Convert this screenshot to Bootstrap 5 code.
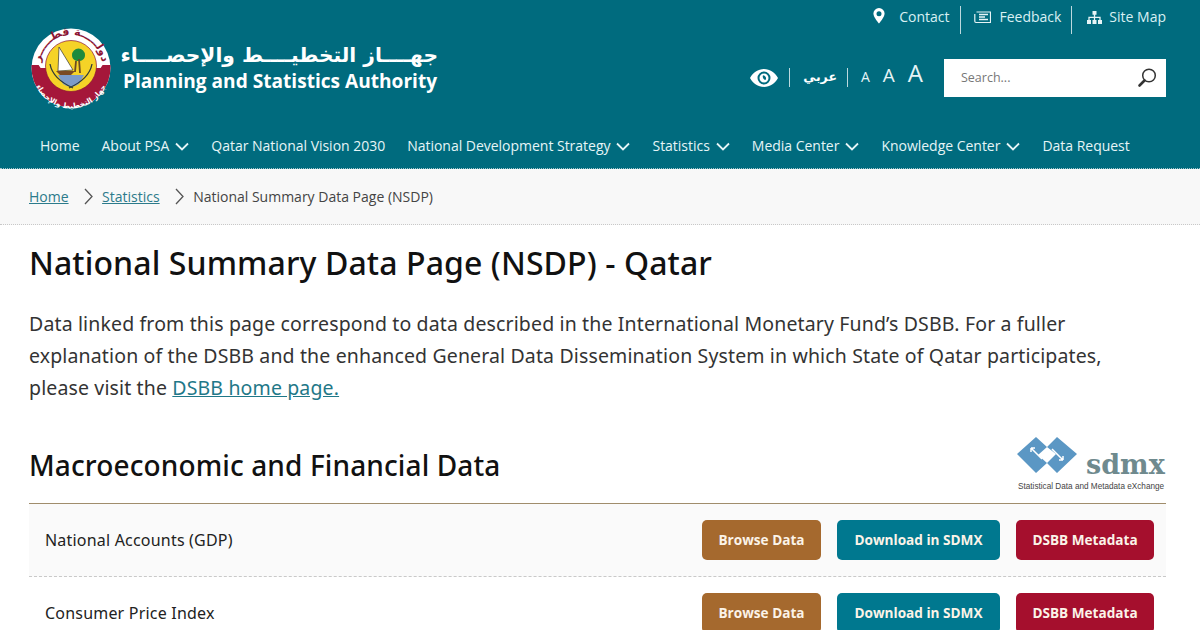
<!DOCTYPE html>
<html lang="en">
<head>
<meta charset="utf-8">
<title>National Summary Data Page (NSDP) - Qatar</title>
<link rel="stylesheet" href="https://cdn.jsdelivr.net/npm/bootstrap@5.3.0/dist/css/bootstrap.min.css">
<style>
html,body{overflow:hidden;height:630px}
body{font-family:"Open Sans","DejaVu Sans",sans-serif;color:#222;background:#fff}
.site-top{background:#006b7e;height:169px;border-bottom:1px dotted #9fc4cb;padding:0 34px 0 29px;color:#fff}
.top-block{height:134px}
.brand-wrap{padding-top:26px}
.top-links{height:34px;padding-top:6px}
.top-links a{color:#d9f0f3;font-size:14px;text-decoration:none;display:flex;align-items:center;line-height:22px}
.top-links .t-item{padding:0 10px 0 15px;border-right:1px solid #bcd9de}
.top-links .t-item:first-child{padding-right:11px}
.top-links .t-item:nth-child(2){padding-left:13px}
.top-links .t-item:last-child{border-right:0;padding-right:0}
.ic-a{margin-right:14px;margin-top:-3px}
.ic-b{margin-right:8px}
.ic-c{margin-right:7px}
.brand-txt{margin-left:10px;margin-top:16px}
.brand-ar{font-family:"DejaVu Sans",sans-serif;font-weight:700;font-size:20.200px;line-height:26px;direction:rtl;width:315px;white-space:nowrap}
.brand-en{font-weight:700;font-size:19.100px;line-height:24px;white-space:nowrap;margin-top:1px}
.tools{margin-top:25px;height:38px}
.tools .sep{width:1px;height:19px;background:#bcd9de;margin-bottom:2px}
.ar-link{font-family:"DejaVu Sans",sans-serif;font-weight:700;font-size:12.500px}
.sizes{gap:13px;margin:0 21px 0 13px;padding-bottom:10px}
.sizes span{color:#e6f4f6;line-height:1}
.sz1{font-size:14px}.sz2{font-size:19px}.sz3{font-size:24px}
.eye{margin-right:11px}
.ar-wrap{margin:0 10px 0 13px;padding-bottom:6px}
.search-box{width:222px;height:38px;background:#fff;padding:0 8px 0 17px}
.search-box span{color:#777;font-size:12.500px}
.main-nav{padding-left:11px;gap:22px}
.main-nav a{color:#e6f5f7;font-size:14px;letter-spacing:-.02px;text-decoration:none;display:flex;align-items:center;line-height:24px;white-space:nowrap}
.main-nav a svg{margin-left:6px}
.crumbs{height:56px;background:#f8f8f8;border-bottom:1px dotted #c8c8c8;padding-left:29px;font-size:14px;color:#444}
.crumbs a{color:#2c7b8b}
.crumbs svg{margin:0 9.500px 0 15px}
.content-wrap{padding:0 34px 0 29px}
.pg-title{font-family:"Noto Sans",sans-serif;font-size:32px;font-weight:500;line-height:40px;color:#111;margin:18px 0 25px;white-space:nowrap;letter-spacing:.1px}
.intro{font-family:"Noto Sans",sans-serif;font-size:19.500px;line-height:32px;color:#333;margin:0;letter-spacing:.14px;max-width:1115px}
.intro a{color:#1f7888}
.sec-head{margin-top:34px;height:66px;border-bottom:1px solid #a08d6c}
.sec-title{font-family:"Noto Sans",sans-serif;font-size:28px;font-weight:500;line-height:36px;color:#111;margin:0 0 20px;white-space:nowrap;letter-spacing:.12px}
.sdmx-logo{margin-bottom:10px}
.data-row{height:73px;padding:0 12px 0 16px;border-bottom:1px dashed #c9c9c9;font-family:"Noto Sans",sans-serif;font-size:16px;color:#222;letter-spacing:.2px}
.data-row.shade{background:#fafafa}
.act{height:40px;padding:0;font-family:"Open Sans",sans-serif;font-size:13.600px;font-weight:700;letter-spacing:0;color:#fbf3e8;border:0;border-radius:5px;margin-left:16px;display:flex;align-items:center;justify-content:center}
.act-browse{background:#a5692e;width:119px}
.act-sdmx{background:#00788f;width:163px}
.act-dsbb{background:#a50f2d;width:138px}
</style>
</head>
<body>
<header class="site-top">
  <div class="top-block d-flex justify-content-between">
    <div class="brand-wrap d-flex align-items-start">
      <svg class="flex-shrink-0" width="84" height="84" viewBox="0 0 84 84">
        <defs>
          <path id="arcTop" d="M11 40a31 31 0 0 1 62 0"/>
          <path id="arcBot" d="M3.500 44a38.500 38.500 0 0 0 77 0"/>
        </defs>
        <circle cx="42" cy="42" r="39.500" fill="#fff"/>
        <path fill="#a5173a" d="M2.600 39h7l2 3h60l2-3h7.800A39.500 39.500 0 1 1 2.600 39z"/>
        <text font-family="DejaVu Sans" font-weight="700" font-size="11" fill="#8c1433" direction="rtl"><textPath href="#arcTop" startOffset="50%" text-anchor="middle">دولـــــة قطـــــر</textPath></text>
        <text font-family="DejaVu Sans" font-weight="700" font-size="7.500" fill="#fff" direction="rtl"><textPath href="#arcBot" startOffset="50%" text-anchor="middle">جهاز التخطيط والإحصاء</textPath></text>
        <circle cx="42" cy="40" r="25.500" fill="#f5d327" stroke="#8c1433" stroke-width=".7"/>
        <path fill="#fff" stroke="#333" stroke-width=".7" d="M30 21l14 23-15 1z"/>
        <path fill="#7a4a23" d="M27 45h19l-4 4H31z"/>
        <path fill="#1d8a3d" d="M43 29a6.500 6.500 0 0 1 13 0c0 4-3 6-6.500 6S43 33 43 29z"/>
        <path stroke="#6a4a23" stroke-width="1.800" d="M50 33l1 14M47 35l-1 11"/>
        <path fill="#7c9bc9" d="M29 49h26l-5 9a13 13 0 0 1-16 0z"/>
        <path fill="none" stroke="#2d3a3a" stroke-width="1.300" d="M21 38c2 11 12 19 23 24M63 38c-2 11-12 19-23 24"/>
      </svg>
      <div class="brand-txt">
        <div class="brand-ar" lang="ar">جهــــاز التخطيــــط والإحصــــاء</div>
        <div class="brand-en">Planning and Statistics Authority</div>
      </div>
    </div>
    <div class="d-flex flex-column align-items-end">
      <div class="top-links d-flex justify-content-end">
        <div class="t-item"><a href="#"><svg class="ic-a" width="12" height="16" viewBox="0 0 12 16"><path fill="#fff" fill-rule="evenodd" d="M6 0a5.600 5.600 0 0 0-5.600 5.600C.4 9.400 6 15.500 6 15.500s5.600-6.100 5.600-9.900A5.600 5.600 0 0 0 6 0zm0 3.200a2.500 2.500 0 1 1 0 5 2.500 2.500 0 0 1 0-5z"/></svg>Contact</a></div>
        <div class="t-item"><a href="#"><svg class="ic-b" width="17" height="13" viewBox="0 0 17 13"><path fill="none" stroke="#e6f4f6" stroke-width="1.200" d="M2.500 1h14v10.500H2A1.200 1.200 0 0 1 .8 10.300V3"/><path stroke="#e6f4f6" stroke-width="1.500" d="M5 3.500h9M5 6h6M5 8.500h9"/></svg>Feedback</a></div>
        <div class="t-item"><a href="#"><svg class="ic-c" width="15" height="13" viewBox="0 0 15 13"><path fill="#e6f4f6" d="M5.500 0h4v3.700h-4zM0 9h4v4H0zM5.500 9h4v4h-4zM11 9h4v4h-4z"/><path fill="none" stroke="#e6f4f6" stroke-width="1.300" d="M7.500 3v6M2 9V6.300h11V9"/></svg>Site Map</a></div>
      </div>
      <div class="d-flex align-items-center tools">
        <svg class="eye" width="28" height="18" viewBox="0 0 28 18"><path fill="#fff" fill-rule="evenodd" d="M14 0C8 0 3 3.500 0 9c3 5.500 8 9 14 9s11-3.500 14-9c-3-5.500-8-9-14-9zm0 2.500a6.500 6.500 0 1 1 0 13 6.500 6.500 0 0 1 0-13z"/><path fill="#fff" fill-rule="evenodd" d="M14 4.500a4.500 4.500 0 1 0 4.500 4.500A4.500 4.500 0 0 0 14 4.500zm-1 1.800a3 3 0 0 1 2.500 4.700A3.500 3.500 0 0 1 13 6.300z"/></svg>
        <span class="sep"></span>
        <span class="ar-wrap"><a href="#" class="ar-link text-white text-decoration-none" lang="ar">عربي</a></span>
        <span class="sep"></span>
        <div class="sizes d-flex align-items-baseline">
          <span class="sz1">A</span><span class="sz2">A</span><span class="sz3">A</span>
        </div>
        <div class="search-box d-flex align-items-center justify-content-between">
          <span>Search...</span>
          <svg width="22" height="22" viewBox="0 0 22 22"><circle cx="13" cy="8.500" r="6.300" fill="none" stroke="#333" stroke-width="1.500"/><path stroke="#333" stroke-width="2.600" stroke-linecap="round" d="M8.500 13.500L3.500 18.500"/></svg>
        </div>
      </div>
    </div>
  </div>
  <nav class="main-nav d-flex">
    <a href="#">Home</a>
    <a href="#">About PSA<svg width="14" height="9" viewBox="0 0 14 9"><path fill="none" stroke="#e6f5f7" stroke-width="1.800" d="M1 1.500l6 6 6-6"/></svg></a>
    <a href="#">Qatar National Vision 2030</a>
    <a href="#">National Development Strategy<svg width="14" height="9" viewBox="0 0 14 9"><path fill="none" stroke="#e6f5f7" stroke-width="1.800" d="M1 1.500l6 6 6-6"/></svg></a>
    <a href="#">Statistics<svg width="14" height="9" viewBox="0 0 14 9"><path fill="none" stroke="#e6f5f7" stroke-width="1.800" d="M1 1.500l6 6 6-6"/></svg></a>
    <a href="#">Media Center<svg width="14" height="9" viewBox="0 0 14 9"><path fill="none" stroke="#e6f5f7" stroke-width="1.800" d="M1 1.500l6 6 6-6"/></svg></a>
    <a href="#">Knowledge Center<svg width="14" height="9" viewBox="0 0 14 9"><path fill="none" stroke="#e6f5f7" stroke-width="1.800" d="M1 1.500l6 6 6-6"/></svg></a>
    <a href="#">Data Request</a>
  </nav>
</header>
<div class="crumbs d-flex align-items-center">
  <a href="#">Home</a>
  <svg width="9" height="17" viewBox="0 0 9 17"><path fill="none" stroke="#555" stroke-width="1.300" d="M1 1l7 7.500L1 16"/></svg>
  <a href="#">Statistics</a>
  <svg width="9" height="17" viewBox="0 0 9 17"><path fill="none" stroke="#555" stroke-width="1.300" d="M1 1l7 7.500L1 16"/></svg>
  <span>National Summary Data Page (NSDP)</span>
</div>
<main class="content-wrap">
  <h1 class="pg-title">National Summary Data Page (NSDP) - Qatar</h1>
  <p class="intro">Data linked from this page correspond to data described in the International Monetary Fund’s DSBB. For a fuller explanation of the DSBB and the enhanced General Data Dissemination System in which State of Qatar participates, please visit the <a href="#">DSBB home page.</a></p>
  <div class="sec-head d-flex justify-content-between align-items-end">
    <h2 class="sec-title">Macroeconomic and Financial Data</h2>
    <svg class="sdmx-logo flex-shrink-0" width="150" height="57" viewBox="0 0 150 57">
      <path fill="#5b97c4" d="M1 18L20 1l11 10-9 8 9 8-11 10zM31 11L41 1l20 17-20 19-10-10 9-9z"/>
      <path fill="none" stroke="#fff" stroke-width="1.500" d="M15 12l11 11M15 12h4M15 12v4M36 13l11 11M47 24h-4M47 24v-4"/>
      <text x="70" y="38" font-family="DejaVu Serif" font-weight="700" font-size="27" fill="#6f8a8e">sdmx</text>
      <text x="2" y="53" font-family="Liberation Sans" font-size="8.200" fill="#444">Statistical Data and Metadata eXchange</text>
    </svg>
  </div>
  <div class="data-row shade d-flex align-items-center justify-content-between">
    <span>National Accounts (GDP)</span>
    <div class="d-flex">
      <a href="#" class="btn act act-browse">Browse Data</a>
      <a href="#" class="btn act act-sdmx">Download in SDMX</a>
      <a href="#" class="btn act act-dsbb">DSBB Metadata</a>
    </div>
  </div>
  <div class="data-row d-flex align-items-center justify-content-between">
    <span>Consumer Price Index</span>
    <div class="d-flex">
      <a href="#" class="btn act act-browse">Browse Data</a>
      <a href="#" class="btn act act-sdmx">Download in SDMX</a>
      <a href="#" class="btn act act-dsbb">DSBB Metadata</a>
    </div>
  </div>
</main>
<script src="https://cdn.jsdelivr.net/npm/bootstrap@5.3.0/dist/js/bootstrap.bundle.min.js"></script>
</body>
</html>
